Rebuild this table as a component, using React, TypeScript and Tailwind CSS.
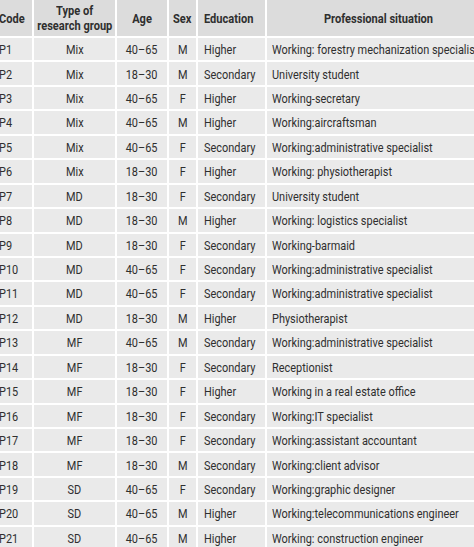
import React from "react";

const rows: [string, string, string, string, string, string][] = [
  ["P1", "Mix", "40\u201365", "M", "Higher", "Working: forestry mechanization specialist"],
  ["P2", "Mix", "18\u201330", "M", "Secondary", "University student"],
  ["P3", "Mix", "40\u201365", "F", "Higher", "Working-secretary"],
  ["P4", "Mix", "40\u201365", "M", "Higher", "Working:aircraftsman"],
  ["P5", "Mix", "40\u201365", "F", "Secondary", "Working:administrative specialist"],
  ["P6", "Mix", "18\u201330", "F", "Higher", "Working: physiotherapist"],
  ["P7", "MD", "18\u201330", "F", "Secondary", "University student"],
  ["P8", "MD", "18\u201330", "M", "Higher", "Working: logistics specialist"],
  ["P9", "MD", "18\u201330", "F", "Secondary", "Working-barmaid"],
  ["P10", "MD", "40\u201365", "F", "Secondary", "Working:administrative specialist"],
  ["P11", "MD", "40\u201365", "F", "Secondary", "Working:administrative specialist"],
  ["P12", "MD", "18\u201330", "M", "Higher", "Physiotherapist"],
  ["P13", "MF", "40\u201365", "M", "Secondary", "Working:administrative specialist"],
  ["P14", "MF", "18\u201330", "F", "Secondary", "Receptionist"],
  ["P15", "MF", "18\u201330", "F", "Higher", "Working in a real estate office"],
  ["P16", "MF", "18\u201330", "F", "Secondary", "Working:IT specialist"],
  ["P17", "MF", "18\u201330", "F", "Secondary", "Working:assistant accountant"],
  ["P18", "MF", "18\u201330", "M", "Secondary", "Working:client advisor"],
  ["P19", "SD", "40\u201365", "F", "Secondary", "Working:graphic designer"],
  ["P20", "SD", "40\u201365", "M", "Higher", "Working:telecommunications engineer"],
  ["P21", "SD", "40\u201365", "M", "Higher", "Working: construction engineer"],
];

function L({ children }: { children: React.ReactNode }) {
  return <span className="inline-block whitespace-nowrap scale-x-[0.81] origin-left">{children}</span>;
}
function C({ children }: { children: React.ReactNode }) {
  return <span className="inline-block whitespace-nowrap scale-x-[0.81] origin-center">{children}</span>;
}
function BL({ children }: { children: React.ReactNode }) {
  return <span className="inline-block whitespace-nowrap scale-x-[0.82] origin-left">{children}</span>;
}
function BC({ children }: { children: React.ReactNode }) {
  return <span className="inline-block whitespace-nowrap scale-x-[0.82] origin-center">{children}</span>;
}

export default function App() {
  return (
    <div className="w-[474px] h-[547px] overflow-hidden bg-white">
      <div className="grid grid-cols-[32px_81px_50px_27px_67px_222px] gap-[2px] grid-rows-[36px] auto-rows-[22.45px] text-[13.5px] text-[#2f2f2f] [font-family:Roboto,'Liberation_Sans',sans-serif]">
        <div className="bg-[#dcdcdc] flex items-center font-bold -ml-[1px]">
          <BL>Code</BL>
        </div>
        <div className="bg-[#dcdcdc] flex flex-col items-center justify-center font-bold leading-[15px]">
          <BC>Type of</BC>
          <BC>research group</BC>
        </div>
        <div className="bg-[#dcdcdc] flex items-center justify-center font-bold">
          <BC>Age</BC>
        </div>
        <div className="bg-[#dcdcdc] flex items-center justify-center font-bold">
          <BC>Sex</BC>
        </div>
        <div className="bg-[#dcdcdc] flex items-center pl-[6px] font-bold">
          <BL>Education</BL>
        </div>
        <div className="bg-[#dcdcdc] flex items-center justify-center font-bold">
          <BC>Professional situation</BC>
        </div>
        {rows.map((r) => (
          <React.Fragment key={r[0]}>
            <div className="bg-[#eaeaea] flex items-center -ml-[1px]">
              <L>{r[0]}</L>
            </div>
            <div className="bg-[#eaeaea] flex items-center justify-center">
              <C>{r[1]}</C>
            </div>
            <div className="bg-[#eaeaea] flex items-center justify-center">
              <C>{r[2]}</C>
            </div>
            <div className="bg-[#eaeaea] flex items-center justify-center">
              <C>{r[3]}</C>
            </div>
            <div className="bg-[#eaeaea] flex items-center pl-[6px]">
              <L>{r[4]}</L>
            </div>
            <div className="bg-[#eaeaea] flex items-center pl-[5px] overflow-hidden">
              <L>{r[5]}</L>
            </div>
          </React.Fragment>
        ))}
      </div>
    </div>
  );
}
